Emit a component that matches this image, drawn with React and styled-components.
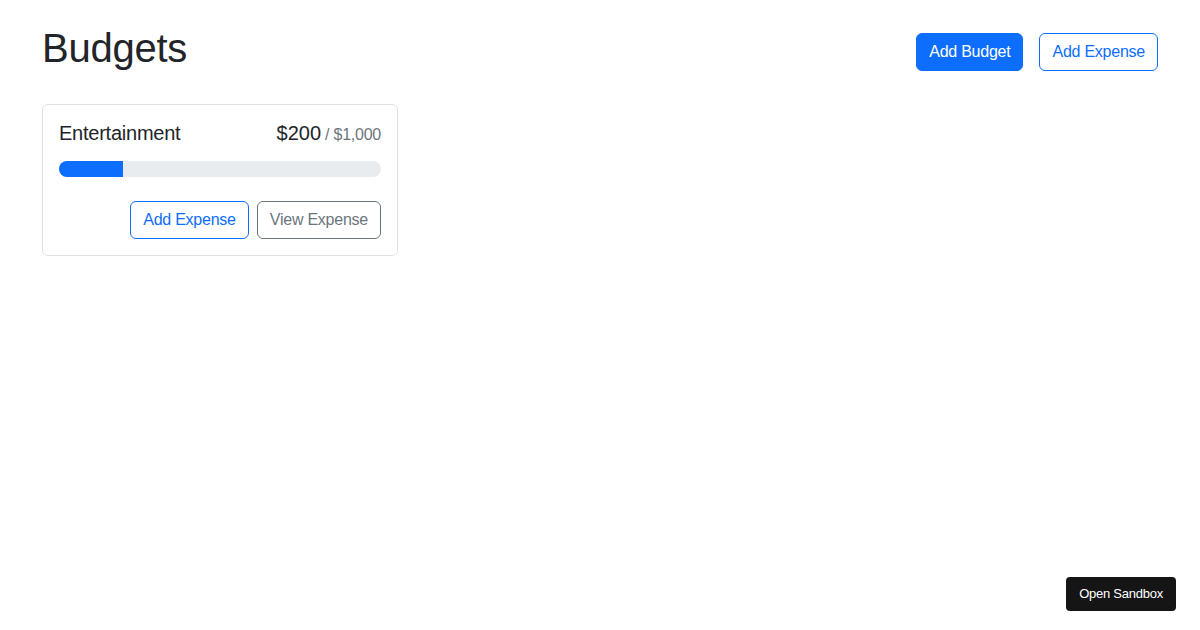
import React from 'react'
import styled, { createGlobalStyle } from 'styled-components'

// Global reset, bootstrap-ish
const GlobalStyle = createGlobalStyle`
    * {
        box-sizing: border-box;
    }
    body {
        margin: 0;
        font-family: "Liberation Sans", Arial, sans-serif;
        font-size: 16px;
        line-height: 1.5;
        letter-spacing: -0.015em;
        color: #212529;
        background-color: #fff;
    }
`

// Styled components
const Container = styled.div`
    max-width: 1140px;
    margin: 24px auto;
    padding: 0 12px;
`
const Header = styled.div`
    display: flex;
    align-items: center;
    gap: 16px;
    margin-bottom: 24px;
`
const Title = styled.h1`
    margin: 0 auto 8px 0;
    font-size: 40px;
    font-weight: 500;
    line-height: 1.2;
`
const Button = styled.button`
    display: inline-block;
    padding: 6px 12px;
    font-family: inherit;
    font-size: 16px;
    line-height: 1.5;
    letter-spacing: inherit;
    border-radius: 6px;
    border: 1px solid ${(props) => props.color};
    background-color: ${(props) => (props.solid ? props.color : 'transparent')};
    color: ${(props) => (props.solid ? '#fff' : props.color)};
    cursor: pointer;
`
const CardGrid = styled.div`
    display: grid;
    grid-template-columns: repeat(3, 356px);
    gap: 16px;
    align-items: start;
`
const Card = styled.div`
    border: 1px solid #dee2e6;
    border-radius: 6px;
    padding: 16px;
`
const CardTitle = styled.div`
    display: flex;
    justify-content: space-between;
    align-items: baseline;
    font-size: 20px;
    line-height: 1.2;
    margin-bottom: 16px;
`
const Amount = styled.span`
    letter-spacing: 0;
`
const Limit = styled.span`
    font-size: 16px;
    color: #6c757d;
    margin-left: 4px;
    letter-spacing: -0.015em;
`
const Progress = styled.div`
    height: 16px;
    border-radius: 50rem;
    background-color: #e9ecef;
    overflow: hidden;
    margin-bottom: 24px;
`
const ProgressBar = styled.div`
    height: 100%;
    background-color: #0d6efd;
`
const Actions = styled.div`
    display: flex;
    justify-content: flex-end;
    gap: 8px;
`
const SandboxButton = styled.div`
    position: fixed;
    right: 24px;
    bottom: 19px;
    padding: 8px 13px;
    background-color: #151515;
    color: #fff;
    font-size: 13px;
    line-height: 18px;
    border-radius: 4px;
`

const budgets = [{ id: 1, name: 'Entertainment', amount: 200, max: 1000 }]

const currency = (n) => '$' + n.toLocaleString('en-US')

const BudgetCard = ({ name, amount, max }) => (
    <Card>
        <CardTitle>
            <span>{name}</span>
            <Amount>
                {currency(amount)}
                <Limit>/ {currency(max)}</Limit>
            </Amount>
        </CardTitle>
        <Progress>
            <ProgressBar style={{ width: `${(amount / max) * 100}%` }} />
        </Progress>
        <Actions>
            <Button color="#0d6efd">Add Expense</Button>
            <Button color="#6c757d">View Expense</Button>
        </Actions>
    </Card>
)

const App = () => {
    return (
        <>
            <GlobalStyle />
            <Container>
                <Header>
                    <Title>Budgets</Title>
                    <Button solid color="#0d6efd">Add Budget</Button>
                    <Button color="#0d6efd">Add Expense</Button>
                </Header>
                <CardGrid>
                    {budgets.map((b) => (
                        <BudgetCard key={b.id} {...b} />
                    ))}
                </CardGrid>
            </Container>
            <SandboxButton>Open Sandbox</SandboxButton>
        </>
    )
}

export default App
